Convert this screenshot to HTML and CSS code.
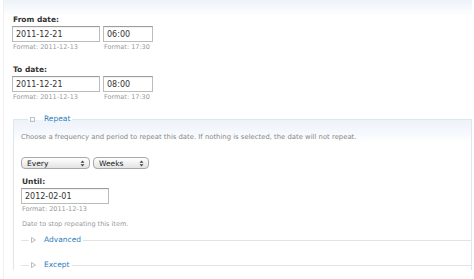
FILE: index.html
```html
<!DOCTYPE html>
<html lang="en">
<head>
    <meta charset="UTF-8">
    <title>Date repeat</title>
    <link rel="stylesheet" href="styles.css">
</head>
<body>
    <div class="panel">
        <!-- From date -->
        <div class="form-item">
            <label>From date:</label>
            <div class="row">
                <div class="field">
                    <input class="date" type="text" value="2011-12-21">
                    <div class="format">Format: 2011-12-13</div>
                </div>
                <div class="field">
                    <input class="time" type="text" value="06:00">
                    <div class="format">Format: 17:30</div>
                </div>
            </div>
        </div>

        <!-- To date -->
        <div class="form-item">
            <label>To date:</label>
            <div class="row">
                <div class="field">
                    <input class="date" type="text" value="2011-12-21">
                    <div class="format">Format: 2011-12-13</div>
                </div>
                <div class="field">
                    <input class="time" type="text" value="08:00">
                    <div class="format">Format: 17:30</div>
                </div>
            </div>
        </div>

        <!-- Repeat -->
        <fieldset class="repeat">
            <legend><span class="sq"></span><a href="#">Repeat</a></legend>
            <p class="help">Choose a frequency and period to repeat this date. If nothing is selected, the date will not repeat.</p>

            <div class="row selects">
                <span class="select every">Every
                    <svg width="5" height="7" viewBox="0 0 5 7"><path d="M0.5 2.8 L2.5 0.5 L4.5 2.8 Z M0.5 4.2 L2.5 6.5 L4.5 4.2 Z" fill="#444"/></svg>
                </span>
                <span class="select weeks">Weeks
                    <svg width="5" height="7" viewBox="0 0 5 7"><path d="M0.5 2.8 L2.5 0.5 L4.5 2.8 Z M0.5 4.2 L2.5 6.5 L4.5 4.2 Z" fill="#444"/></svg>
                </span>
            </div>

            <div class="form-item until">
                <label>Until:</label>
                <input class="date" type="text" value="2012-02-01">
                <div class="format">Format: 2011-12-13</div>
                <div class="format stop">Date to stop repeating this item.</div>
            </div>

            <fieldset class="collapsed">
                <legend><svg class="tri" width="5" height="6" viewBox="0 0 5 6"><path d="M0.5 0.5 L4.5 3 L0.5 5.5 Z" fill="none" stroke="#bbb" stroke-width="1"/></svg><a href="#">Advanced</a></legend>
            </fieldset>
            <fieldset class="collapsed">
                <legend><svg class="tri" width="5" height="6" viewBox="0 0 5 6"><path d="M0.5 0.5 L4.5 3 L0.5 5.5 Z" fill="none" stroke="#bbb" stroke-width="1"/></svg><a href="#">Except</a></legend>
            </fieldset>
        </fieldset>
    </div>
</body>
</html>
```

FILE: styles.css
```css
body {
    margin: 0;
    font-family: "DejaVu Sans", Verdana, sans-serif;
    color: #333;
    background-color: #fff;
}

/* Contenedor */
.panel {
    margin: 0 2px 0 3px;
    padding: 15px 0 0 8px;
    height: 264px;
    border-left: 1px solid #f1f1f1;
    background: linear-gradient(#edf3f9, #fbfcfe 13px, #fff 16px);
}

.form-item label {
    display: block;
    font-size: 7.5px;
    font-weight: bold;
    line-height: 10px;
    margin-left: 1px;
}

.form-item + .form-item {
    margin-top: 14px;
}

.row {
    display: flex;
    gap: 3px;
}

input {
    display: block;
    box-sizing: border-box;
    height: 16px;
    margin: 1px 0 0;
    padding: 0 3px;
    border: 1px solid #bcbcbc;
    border-top-color: #9d9d9d;
    font-family: inherit;
    font-size: 8px;
    color: #333;
    background: #fff;
    box-shadow: inset 0 1px 1px rgba(0, 0, 0, 0.06);
}

input.date {
    width: 88px;
}

input.time {
    width: 50px;
}

.format {
    font-size: 6.5px;
    line-height: 8px;
    color: #999;
    margin: 1px 0 0 1px;
}

/* Fieldsets */
fieldset {
    margin: 0;
    padding: 0;
    min-width: 0;
}

legend {
    display: flex;
    align-items: center;
    padding: 0 2px;
    margin-left: 7px;
    font-size: 7.5px;
    line-height: 10px;
}

legend a {
    color: #2a7cc0;
    text-decoration: none;
}

.repeat {
    margin: 13px 0 0 1px;
    padding: 0 0 0 7px;
    border: 1px solid #dfe6ee;
    border-bottom: 0;
    background: linear-gradient(#edf3fa, #f8fafd 16px, #fff 22px);
}

.sq {
    width: 3px;
    height: 3px;
    border: 1px solid #b9c3cc;
    margin-right: 9px;
}

.help {
    margin: 9px 0 0;
    font-size: 6.85px;
    line-height: 9px;
    color: #888;
}

.selects {
    margin-top: 15px;
}

.select {
    display: flex;
    align-items: center;
    justify-content: space-between;
    box-sizing: border-box;
    height: 12px;
    padding: 0 4px 0 5px;
    border: 1px solid #a8a8a8;
    border-radius: 4px;
    font-size: 7.5px;
    color: #222;
    background: linear-gradient(#ffffff, #f1f1f1 50%, #e3e3e3);
}

.select.every {
    width: 69px;
}

.select.weeks {
    width: 56px;
}

.until {
    margin-top: 8px;
}

.until label {
    margin-left: 1px;
}

.stop {
    margin-top: 7px;
}

.collapsed {
    margin-top: 7px;
    border: 0;
    border-top: 1px solid #e3e3e3;
    height: 0;
}

.collapsed + .collapsed {
    margin-top: 15px;
}

.collapsed legend {
    margin-left: 8px;
}

.tri {
    margin-right: 8px;
}
```
